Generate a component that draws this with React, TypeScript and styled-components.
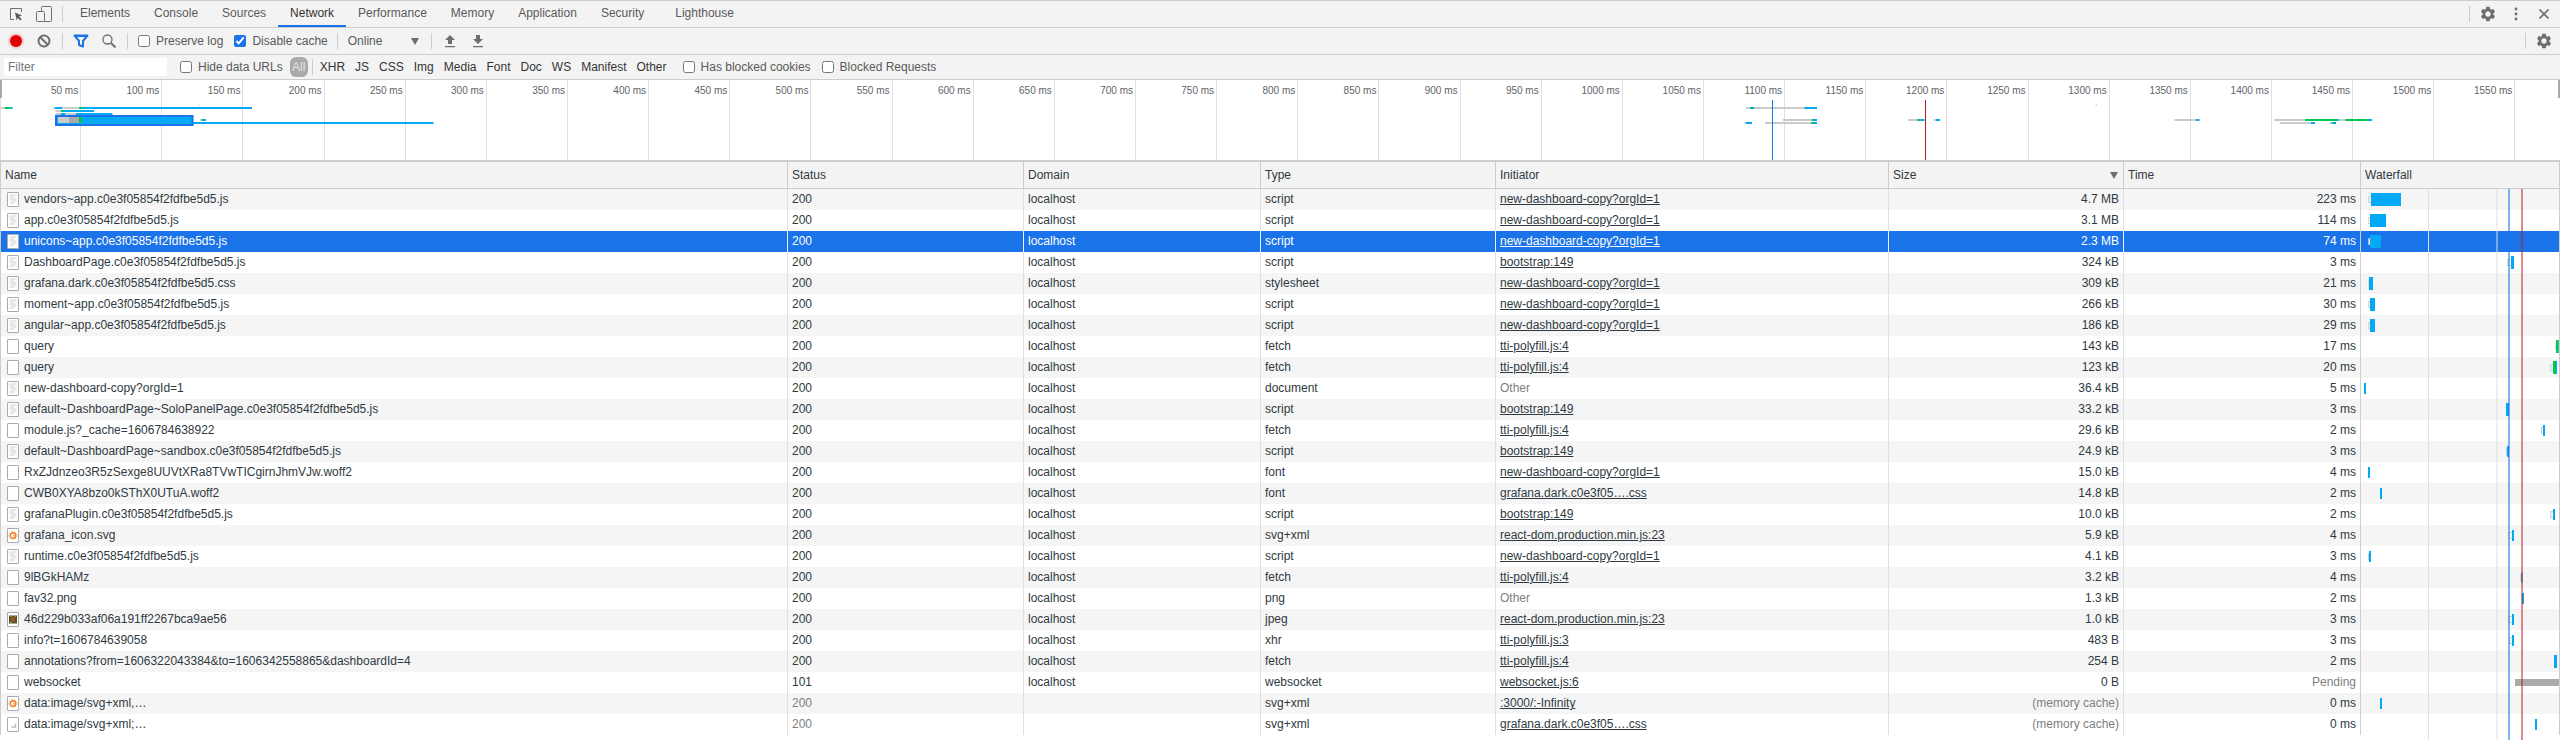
import React from "react";
import styled, { createGlobalStyle } from "styled-components";

const GlobalStyle = createGlobalStyle`
  html, body {
    margin: 0;
    padding: 0;
    background: #fff;
  }
  body {
    font-family: "Liberation Sans", Arial, sans-serif;
    font-size: 12px;
    color: #303942;
  }
`;

const BLUE = "#03a9f4";
const GREEN = "#00c853";
const GRAY = "#cbcbcb";

const Page = styled.div`
  width: 2560px;
  height: 740px;
  overflow: hidden;
  background: #fff;
`;

const Bar = styled.div`
  display: flex;
  align-items: center;
  box-sizing: border-box;
  background: #f3f3f3;
  border-bottom: 1px solid #ccc;
`;

const TabBar = styled(Bar)`
  height: 28px;
  border-top: 1px solid #ccc;
  padding: 0 2px;
`;

const Toolbar = styled(Bar)`
  height: 27px;
  padding: 0 2px;
`;

const FilterBar = styled(Bar)`
  height: 25px;
  padding-left: 4px;
  color: #333;
`;

const ToolButton = styled.div`
  width: 28px;
  height: 26px;
  display: flex;
  align-items: center;
  justify-content: center;
  flex: none;
`;

const Sep = styled.div`
  width: 1px;
  height: 16px;
  margin: 0 4px;
  background: #ccc;
  flex: none;
`;

const TabStrip = styled.div`
  display: flex;
  padding-left: 1px;
`;

const Tab = styled.div<{ $active?: boolean; $spaced?: boolean }>`
  height: 26px;
  line-height: 25px;
  box-sizing: border-box;
  padding: 0 12px;
  margin-left: ${(p) => (p.$spaced ? "7px" : "0")};
  color: ${(p) => (p.$active ? "#333" : "#5a5a5a")};
  border-bottom: 2px solid ${(p) => (p.$active ? "#1a73e8" : "transparent")};
`;

const Spring = styled.div`
  flex: 1;
`;

const CheckLabel = styled.label`
  display: flex;
  align-items: center;
  gap: 6px;
  margin: 0 5px 0 6px;
  color: #5a5a5a;
  white-space: nowrap;
  input {
    width: 12px;
    height: 12px;
    margin: 0;
    accent-color: #1a73e8;
  }
`;

const Throttle = styled.div`
  width: 85px;
  box-sizing: border-box;
  padding: 0 8px 0 6px;
  display: flex;
  align-items: center;
  justify-content: space-between;
  color: #5a5a5a;
`;

const FilterInput = styled.input`
  width: 163px;
  height: 18px;
  box-sizing: border-box;
  border: 0;
  padding: 0 4px;
  margin-right: 7px;
  background: #fff;
  font: inherit;
  &::placeholder {
    color: #757575;
  }
`;

const AllPill = styled.div`
  width: 18px;
  height: 20px;
  margin-left: 2px;
  line-height: 20px;
  text-align: center;
  border-radius: 6px;
  background: #aaa;
  color: #e4e4e4;
`;

const TypeList = styled.div`
  display: flex;
  gap: 10px;
  margin: 0 10px 0 3px;
`;

const TypeItem = styled.span`
  color: #333;
`;

const Overview = styled.div`
  position: relative;
  height: 80px;
  box-sizing: border-box;
  display: grid;
  grid-template-columns: repeat(31, 81.15px) 1fr;
  background: #fff;
`;

const TickCell = styled.div`
  box-sizing: border-box;
  border-right: 1px solid #e0e0e0;
  padding: 5px 2px 0 0;
  text-align: right;
  font-size: 10px;
  line-height: 12px;
  color: #5f6368;
`;

const ChartLayer = styled.svg`
  position: absolute;
  left: 0;
  top: 0;
`;

const Table = styled.div`
  border-top: 2px solid #ccc;
  border-left: 1px solid #ccc;
  border-right: 1px solid #ccc;
`;

const COLUMNS = "787px 236px 237px 235px 393px 235px 237px 1fr";

const HeaderRow = styled.div`
  display: grid;
  grid-template-columns: ${COLUMNS};
  height: 27px;
  box-sizing: border-box;
  background: #f3f3f3;
  border-bottom: 1px solid #ccc;
`;

const HeaderCell = styled.div`
  display: flex;
  align-items: center;
  justify-content: space-between;
  padding: 0 5px 0 4px;
  border-right: 1px solid #ccc;
  &:last-child {
    border-right: 0;
  }
`;

const Rows = styled.div`
  position: relative;
`;

const Row = styled.div<{ $striped: boolean; $selected: boolean }>`
  display: grid;
  grid-template-columns: ${COLUMNS};
  height: 21px;
  line-height: 21px;
  background: ${(p) => (p.$selected ? "#1a73e8" : p.$striped ? "#f5f5f5" : "#fff")};
  color: ${(p) => (p.$selected ? "#fff" : "#303942")};
  --sep: ${(p) => (p.$selected ? "rgba(255,255,255,0.9)" : "#e0e0e0")};
  --muted: ${(p) => (p.$selected ? "#fff" : "#808080")};
`;

const Cell = styled.div<{ $right?: boolean; $muted?: boolean; $link?: boolean }>`
  padding: 0 4px;
  border-right: 1px solid var(--sep);
  white-space: nowrap;
  overflow: hidden;
  text-align: ${(p) => (p.$right ? "right" : "left")};
  color: ${(p) => (p.$muted ? "var(--muted)" : "inherit")};
  text-decoration: ${(p) => (p.$link ? "underline" : "none")};
`;

const NameCell = styled(Cell)`
  display: flex;
  align-items: center;
  gap: 5px;
  padding-left: 6px;
`;

const WaterfallCell = styled.div`
  border-left: 1px solid #d0d0d0;
  margin-left: -1px;
`;

const WaterfallLayer = styled.svg`
  position: absolute;
  right: 0;
  top: 0;
`;

const IconBox = styled.svg`
  flex: none;
`;

const Gear = ({ size = 18 }: { size?: number }) => (
  <svg width={size} height={size} viewBox="0 0 24 24" fill="#6e6e6e">
    <path d="M19.14 12.94c.04-.3.06-.61.06-.94 0-.32-.02-.64-.07-.94l2.03-1.58c.18-.14.23-.41.12-.61l-1.92-3.32c-.12-.22-.37-.29-.59-.22l-2.39.96c-.5-.38-1.03-.7-1.62-.94l-.36-2.54c-.04-.24-.24-.41-.48-.41h-3.84c-.24 0-.43.17-.47.41l-.36 2.54c-.59.24-1.13.57-1.62.94l-2.39-.96c-.22-.08-.47 0-.59.22L2.74 8.87c-.12.21-.08.47.12.61l2.03 1.58c-.05.3-.09.63-.09.94s.02.64.07.94l-2.03 1.58c-.18.14-.23.41-.12.61l1.92 3.32c.12.22.37.29.59.22l2.39-.96c.5.38 1.03.7 1.62.94l.36 2.54c.05.24.24.41.48.41h3.84c.24 0 .44-.17.47-.41l.36-2.54c.59-.24 1.13-.56 1.62-.94l2.39.96c.22.08.47 0 .59-.22l1.92-3.32c.12-.22.07-.47-.12-.61l-2.01-1.58zM12 15.6c-1.98 0-3.6-1.62-3.6-3.6s1.62-3.6 3.6-3.6 3.6 1.62 3.6 3.6-1.62 3.6-3.6 3.6z" />
  </svg>
);

const InspectIcon = () => (
  <svg width="16" height="16" viewBox="0 0 16 16" fill="none">
    <path d="M6 13.5H2.5V2.5h11V6" stroke="#6e6e6e" strokeWidth="1" />
    <path d="M7 6.5l7 3-3 1 2.6 2.6-1.3 1.3-2.6-2.6-.9 3z" fill="#5a5a5a" />
  </svg>
);

const DeviceIcon = () => (
  <svg width="18" height="18" viewBox="0 0 18 18" fill="none">
    <rect x="6.5" y="1.5" width="10" height="15" rx="1" stroke="#6e6e6e" />
    <rect x="1.5" y="6.5" width="8" height="10" rx="1" fill="#f3f3f3" stroke="#6e6e6e" />
  </svg>
);

const RecordIcon = () => (
  <svg width="20" height="20" viewBox="0 0 20 20">
    <circle cx="10" cy="10" r="8" fill="#f00" opacity="0.15" />
    <circle cx="10" cy="10" r="6" fill="#e00000" />
  </svg>
);

const ClearIcon = () => (
  <svg width="16" height="16" viewBox="0 0 16 16" fill="none" stroke="#6e6e6e" strokeWidth="2">
    <circle cx="8" cy="8" r="5.5" />
    <path d="M4 4l8 8" />
  </svg>
);

const FunnelIcon = () => (
  <svg width="16" height="14" viewBox="0 0 16 14" fill="none">
    <path d="M1.5 1.5h13L10 7v5.5L6 11V7z" stroke="#1a73e8" strokeWidth="2" strokeLinejoin="round" />
    <path d="M1 1h14v2H1z" fill="#1a73e8" />
  </svg>
);

const SearchIcon = () => (
  <svg width="16" height="16" viewBox="0 0 16 16" fill="none" stroke="#6e6e6e">
    <circle cx="6.5" cy="6.5" r="4.5" strokeWidth="1.3" />
    <path d="M10 10l4.5 4.5" strokeWidth="2" />
  </svg>
);

const UploadIcon = () => (
  <svg width="12" height="14" viewBox="0 0 12 14" fill="#6e6e6e">
    <path d="M6 1l5 5H8v4H4V6H1zM1 12h10v1.2H1z" />
  </svg>
);

const DownloadIcon = () => (
  <svg width="12" height="14" viewBox="0 0 12 14" fill="#6e6e6e">
    <path d="M4 1h4v4h3l-5 5-5-5h3zM1 12h10v1.2H1z" />
  </svg>
);

const Kebab = () => (
  <svg width="4" height="14" viewBox="0 0 4 14" fill="#6e6e6e">
    <circle cx="2" cy="2" r="1.4" />
    <circle cx="2" cy="7" r="1.4" />
    <circle cx="2" cy="12" r="1.4" />
  </svg>
);

const CloseIcon = () => (
  <svg width="10" height="10" viewBox="0 0 10 10" stroke="#6e6e6e" strokeWidth="1.6">
    <path d="M.5.5l9 9M9.5.5l-9 9" />
  </svg>
);

const Caret = () => (
  <svg width="8" height="7" viewBox="0 0 8 7" fill="#6e6e6e">
    <path d="M0 0h8L4 7z" />
  </svg>
);

type IconKind = "doc" | "blank" | "grafana" | "image" | "svg";

const FileIcon = ({ kind }: { kind: IconKind }) => (
  <IconBox width="12" height="15" viewBox="0 0 12 15">
    <rect x="0.5" y="0.5" width="11" height="14" rx="0.5" fill="#fff" stroke="#aaa" />
    {kind === "doc" && (
      <path d="M2.5 3h7M2.5 5h5M2.5 7h7M4 9h5.5M2.5 11h5" stroke="#d0d0d0" strokeWidth="1" />
    )}
    {kind === "grafana" && (
      <>
        <circle cx="6" cy="7.5" r="2.8" fill="none" stroke="#f6792b" strokeWidth="1.4" />
        <circle cx="6" cy="7.5" r="4" fill="none" stroke="#fbb03a" strokeWidth="0.9" strokeDasharray="1.4 1.4" />
        <circle cx="6.6" cy="7.5" r="0.9" fill="#fbb03a" />
      </>
    )}
    {kind === "image" && (
      <>
        <rect x="2" y="3.5" width="8" height="8" fill="#4d5a23" />
        <rect x="4" y="5.5" width="4" height="4" fill="#a0562c" />
        <path d="M3 4.5h1.5M7.5 4.5H9M3 10.5h2" stroke="#c28a3c" />
      </>
    )}
    {kind === "svg" && <path d="M8.5 6.5v3.5H4.5" fill="none" stroke="#bbb" strokeWidth="1.4" />}
  </IconBox>
);

type WaterfallBar = {
  wait?: [number, number];
  green?: [number, number];
  bar: [number, number];
  h?: number;
  color?: string;
};

type Request = {
  name: string;
  icon: IconKind;
  status: string;
  domain: string;
  type: string;
  initiator: string;
  size: string;
  time: string;
  wf: WaterfallBar;
  cached?: boolean;
};

const DASH = "new-dashboard-copy?orgId=1";
const HASH = "c0e3f05854f2fdfbe5d5";

const requests: Request[] = [
  { name: `vendors~app.${HASH}.js`, icon: "doc", status: "200", domain: "localhost", type: "script", initiator: DASH, size: "4.7 MB", time: "223 ms", wf: { wait: [8.3, 11], bar: [11, 41] } },
  { name: `app.${HASH}.js`, icon: "doc", status: "200", domain: "localhost", type: "script", initiator: DASH, size: "3.1 MB", time: "114 ms", wf: { wait: [8.3, 10], bar: [10, 26] } },
  { name: `unicons~app.${HASH}.js`, icon: "doc", status: "200", domain: "localhost", type: "script", initiator: DASH, size: "2.3 MB", time: "74 ms", wf: { wait: [8.3, 10], bar: [10, 21] } },
  { name: `DashboardPage.${HASH}.js`, icon: "doc", status: "200", domain: "localhost", type: "script", initiator: "bootstrap:149", size: "324 kB", time: "3 ms", wf: { wait: [147.3, 151], bar: [151, 154] } },
  { name: `grafana.dark.${HASH}.css`, icon: "doc", status: "200", domain: "localhost", type: "stylesheet", initiator: DASH, size: "309 kB", time: "21 ms", wf: { wait: [8.3, 9], bar: [9, 13] } },
  { name: `moment~app.${HASH}.js`, icon: "doc", status: "200", domain: "localhost", type: "script", initiator: DASH, size: "266 kB", time: "30 ms", wf: { wait: [8.3, 10], bar: [10, 15] } },
  { name: `angular~app.${HASH}.js`, icon: "doc", status: "200", domain: "localhost", type: "script", initiator: DASH, size: "186 kB", time: "29 ms", wf: { wait: [8.3, 10], bar: [10, 15] } },
  { name: "query", icon: "blank", status: "200", domain: "localhost", type: "fetch", initiator: "tti-polyfill.js:4", size: "143 kB", time: "17 ms", wf: { wait: [195.3, 196], green: [196, 198.7], bar: [198.7, 199] } },
  { name: "query", icon: "blank", status: "200", domain: "localhost", type: "fetch", initiator: "tti-polyfill.js:4", size: "123 kB", time: "20 ms", wf: { wait: [190.3, 193], green: [193, 196], bar: [196, 197] } },
  { name: DASH, icon: "doc", status: "200", domain: "localhost", type: "document", initiator: "Other", size: "36.4 kB", time: "5 ms", wf: { bar: [4, 6], h: 11 } },
  { name: `default~DashboardPage~SoloPanelPage.${HASH}.js`, icon: "doc", status: "200", domain: "localhost", type: "script", initiator: "bootstrap:149", size: "33.2 kB", time: "3 ms", wf: { bar: [146, 149] } },
  { name: "module.js?_cache=1606784638922", icon: "blank", status: "200", domain: "localhost", type: "fetch", initiator: "tti-polyfill.js:4", size: "29.6 kB", time: "2 ms", wf: { wait: [181, 183], bar: [183, 185], h: 11 } },
  { name: `default~DashboardPage~sandbox.${HASH}.js`, icon: "doc", status: "200", domain: "localhost", type: "script", initiator: "bootstrap:149", size: "24.9 kB", time: "3 ms", wf: { wait: [146, 147], bar: [147, 149], h: 11 } },
  { name: "RxZJdnzeo3R5zSexge8UUVtXRa8TVwTICgirnJhmVJw.woff2", icon: "blank", status: "200", domain: "localhost", type: "font", initiator: DASH, size: "15.0 kB", time: "4 ms", wf: { bar: [8, 10], h: 11 } },
  { name: "CWB0XYA8bzo0kSThX0UTuA.woff2", icon: "blank", status: "200", domain: "localhost", type: "font", initiator: "grafana.dark.c0e3f05….css", size: "14.8 kB", time: "2 ms", wf: { bar: [20, 22], h: 11 } },
  { name: `grafanaPlugin.${HASH}.js`, icon: "doc", status: "200", domain: "localhost", type: "script", initiator: "bootstrap:149", size: "10.0 kB", time: "2 ms", wf: { wait: [190.3, 193], bar: [193, 195], h: 11 } },
  { name: "grafana_icon.svg", icon: "grafana", status: "200", domain: "localhost", type: "svg+xml", initiator: "react-dom.production.min.js:23", size: "5.9 kB", time: "4 ms", wf: { wait: [148.3, 152], bar: [152, 154], h: 11 } },
  { name: `runtime.${HASH}.js`, icon: "doc", status: "200", domain: "localhost", type: "script", initiator: DASH, size: "4.1 kB", time: "3 ms", wf: { wait: [8, 9], bar: [9, 11], h: 11 } },
  { name: "9lBGkHAMz", icon: "blank", status: "200", domain: "localhost", type: "fetch", initiator: "tti-polyfill.js:4", size: "3.2 kB", time: "4 ms", wf: { wait: [160.3, 161.3], bar: [161.3, 162.7], h: 11 } },
  { name: "fav32.png", icon: "blank", status: "200", domain: "localhost", type: "png", initiator: "Other", size: "1.3 kB", time: "2 ms", wf: { bar: [162, 164], h: 11 } },
  { name: "46d229b033af06a191ff2267bca9ae56", icon: "image", status: "200", domain: "localhost", type: "jpeg", initiator: "react-dom.production.min.js:23", size: "1.0 kB", time: "3 ms", wf: { wait: [148.3, 152], bar: [152, 154], h: 11 } },
  { name: "info?t=1606784639058", icon: "blank", status: "200", domain: "localhost", type: "xhr", initiator: "tti-polyfill.js:3", size: "483 B", time: "3 ms", wf: { wait: [149.3, 152], bar: [152, 154], h: 11 } },
  { name: "annotations?from=1606322043384&to=1606342558865&dashboardId=4", icon: "blank", status: "200", domain: "localhost", type: "fetch", initiator: "tti-polyfill.js:4", size: "254 B", time: "2 ms", wf: { bar: [194, 197] } },
  { name: "websocket", icon: "blank", status: "101", domain: "localhost", type: "websocket", initiator: "websocket.js:6", size: "0 B", time: "Pending", wf: { bar: [155, 199], h: 7, color: "#aaa" } },
  { name: "data:image/svg+xml,…", icon: "grafana", status: "200", domain: "", type: "svg+xml", initiator: ":3000/:-Infinity", size: "(memory cache)", time: "0 ms", cached: true, wf: { bar: [20, 22], h: 11 } },
  { name: "data:image/svg+xml;…", icon: "svg", status: "200", domain: "", type: "svg+xml", initiator: "grafana.dark.c0e3f05….css", size: "(memory cache)", time: "0 ms", cached: true, wf: { bar: [175, 177], h: 11 } },
];

const tabs = ["Elements", "Console", "Sources", "Network", "Performance", "Memory", "Application", "Security"];
const types = ["XHR", "JS", "CSS", "Img", "Media", "Font", "Doc", "WS", "Manifest", "Other"];
const ticks = Array.from({ length: 31 }, (_, i) => `${(i + 1) * 50} ms`);
const headers = ["Name", "Status", "Domain", "Type", "Initiator", "Size", "Time", "Waterfall"];

// x1, x2, y, colour — every overview segment is 2px tall
const segments: [number, number, number, string][] = [
  [1, 5, 107, GRAY], [5, 10.5, 107, GREEN], [10.5, 12.6, 107, BLUE],
  [53.5, 55, 107, GRAY], [55, 62, 107, BLUE], [62, 79, 107, GRAY], [79, 83, 107, GREEN], [83, 252, 107, BLUE],
  [55.5, 61, 110, GRAY], [61, 63, 110, GREEN], [63, 94, 110, BLUE],
  [55.5, 61, 113, GRAY], [61, 65, 113, BLUE], [65, 76, 113, GRAY], [76, 112.4, 113, BLUE],
  [200, 201.5, 119, GRAY], [201.5, 204, 119, GREEN], [204, 206, 119, BLUE],
  [193, 433.5, 122, BLUE],
  [199.5, 200.2, 104, GRAY],
  [1746, 1750, 107, GRAY], [1750, 1752, 107, GREEN], [1752, 1754.6, 107, BLUE], [1754.6, 1804.6, 107, GRAY], [1804.6, 1817, 107, BLUE],
  [1783, 1811.7, 119, GRAY], [1811.7, 1813, 119, GREEN], [1813, 1817, 119, BLUE],
  [1744.4, 1746, 122, GRAY], [1746, 1752, 122, BLUE], [1765, 1811, 122, GRAY], [1811, 1814, 122, GREEN], [1814, 1817, 122, BLUE],
  [1908, 1917.4, 119, GRAY], [1917.4, 1920.4, 119, GREEN], [1920.4, 1924.5, 119, BLUE],
  [1933.7, 1935.7, 119, GRAY], [1935.7, 1940, 119, BLUE],
  [2095.5, 2097, 104, "#ddd"],
  [2174.5, 2196, 119, GRAY], [2196, 2199.5, 119, BLUE],
  [2274, 2305, 119, GRAY], [2305, 2337.7, 119, GREEN], [2337.7, 2339, 119, BLUE], [2339, 2345.4, 119, GRAY], [2345.4, 2367.4, 119, GREEN], [2367.4, 2372, 119, BLUE],
  [2280, 2311, 122, GRAY], [2311, 2315, 122, BLUE],
  [2329.6, 2331.6, 122, GRAY], [2331.6, 2333, 122, GREEN], [2333, 2336, 122, BLUE],
];

const OverviewChart = () => (
  <ChartLayer width="2560" height="80" viewBox="0 80 2560 80">
    <rect x="0" y="80" width="1" height="80" fill="#ddd" />
    <rect x="0" y="80" width="2" height="18" fill="#aaa" />
    <rect x="2558" y="80" width="2" height="18" fill="#aaa" />
    {segments.map(([a, b, y, c], i) => (
      <rect key={i} x={a} y={y} width={b - a} height="2" fill={c} />
    ))}
    <rect x="56" y="116" width="136.5" height="9" fill={BLUE} stroke="#1a73e8" strokeWidth="2" />
    <rect x="58" y="117" width="11" height="6" fill="#ccc" />
    <rect x="69" y="117" width="10" height="6" fill="#aaa" />
    <rect x="79" y="117" width="3" height="6" fill={GREEN} />
    <rect x="1772" y="100" width="1" height="60" fill="#1a73e8" />
    <rect x="1925" y="100" width="1" height="60" fill="#b71c1c" />
  </ChartLayer>
);

const WaterfallChart = ({ selected }: { selected: number }) => (
  <WaterfallLayer width="199" height="551" viewBox="0 0 199 551">
    <rect x="68" y="0" width="1" height="551" fill="#e0e0e0" />
    <rect x="136.5" y="0" width="1" height="551" fill="#e0e0e0" />
    {requests.map(({ wf }, i) => {
      const h = wf.h ?? 13;
      const y = i * 21 + (21 - h) / 2;
      return (
        <g key={i}>
          {wf.wait && (
            <rect
              x={wf.wait[0] + 0.5}
              y={i * 21 + 7.5}
              width={wf.wait[1] - wf.wait[0]}
              height="6"
              fill={i === selected ? "#fff" : "none"}
              stroke="#ccc"
            />
          )}
          {wf.green && <rect x={wf.green[0]} y={y} width={wf.green[1] - wf.green[0]} height={h} fill={GREEN} />}
          <rect x={wf.bar[0]} y={y} width={wf.bar[1] - wf.bar[0]} height={h} fill={wf.color ?? BLUE} />
        </g>
      );
    })}
    <rect x="148" y="0" width="2" height="551" fill="#1a73e8" opacity="0.55" />
    <rect x="161" y="0" width="2" height="551" fill="#b71c1c" opacity="0.5" />
  </WaterfallLayer>
);

const Check = ({ label, checked }: { label: string; checked?: boolean }) => (
  <CheckLabel>
    <input type="checkbox" defaultChecked={checked} />
    {label}
  </CheckLabel>
);

const SELECTED = 2;

const App = () => {
  return (
    <Page>
      <GlobalStyle />
      <TabBar>
        <ToolButton>
          <InspectIcon />
        </ToolButton>
        <ToolButton>
          <DeviceIcon />
        </ToolButton>
        <Sep />
        <TabStrip>
          {tabs.map((t) => (
            <Tab key={t} $active={t === "Network"}>
              {t}
            </Tab>
          ))}
          <Tab $spaced>Lighthouse</Tab>
        </TabStrip>
        <Spring />
        <Sep />
        <ToolButton>
          <Gear />
        </ToolButton>
        <ToolButton>
          <Kebab />
        </ToolButton>
        <ToolButton>
          <CloseIcon />
        </ToolButton>
      </TabBar>

      <Toolbar>
        <ToolButton>
          <RecordIcon />
        </ToolButton>
        <ToolButton>
          <ClearIcon />
        </ToolButton>
        <Sep />
        <ToolButton>
          <FunnelIcon />
        </ToolButton>
        <ToolButton>
          <SearchIcon />
        </ToolButton>
        <Sep />
        <Check label="Preserve log" />
        <Check label="Disable cache" checked />
        <Sep />
        <Throttle>
          Online
          <Caret />
        </Throttle>
        <Sep />
        <ToolButton>
          <UploadIcon />
        </ToolButton>
        <ToolButton>
          <DownloadIcon />
        </ToolButton>
        <Spring />
        <Sep />
        <ToolButton>
          <Gear />
        </ToolButton>
      </Toolbar>

      <FilterBar>
        <FilterInput placeholder="Filter" />
        <Check label="Hide data URLs" />
        <AllPill>All</AllPill>
        <Sep />
        <TypeList>
          {types.map((t) => (
            <TypeItem key={t}>{t}</TypeItem>
          ))}
        </TypeList>
        <Check label="Has blocked cookies" />
        <Check label="Blocked Requests" />
      </FilterBar>

      <Overview>
        {ticks.map((t) => (
          <TickCell key={t}>{t}</TickCell>
        ))}
        <OverviewChart />
      </Overview>

      <Table>
        <HeaderRow>
          {headers.map((h) => (
            <HeaderCell key={h}>
              {h}
              {h === "Size" && <Caret />}
            </HeaderCell>
          ))}
        </HeaderRow>
        <Rows>
          {requests.map((r, i) => (
            <Row key={i} $striped={i % 2 === 0} $selected={i === SELECTED}>
              <NameCell>
                <FileIcon kind={r.icon} />
                {r.name}
              </NameCell>
              <Cell $muted={r.cached}>{r.status}</Cell>
              <Cell>{r.domain}</Cell>
              <Cell>{r.type}</Cell>
              <Cell $link={r.initiator !== "Other"} $muted={r.initiator === "Other"}>
                {r.initiator}
              </Cell>
              <Cell $right $muted={r.cached}>
                {r.size}
              </Cell>
              <Cell $right $muted={r.time === "Pending"}>
                {r.time}
              </Cell>
              <WaterfallCell />
            </Row>
          ))}
          <WaterfallChart selected={SELECTED} />
        </Rows>
      </Table>
    </Page>
  );
};

export default App;
